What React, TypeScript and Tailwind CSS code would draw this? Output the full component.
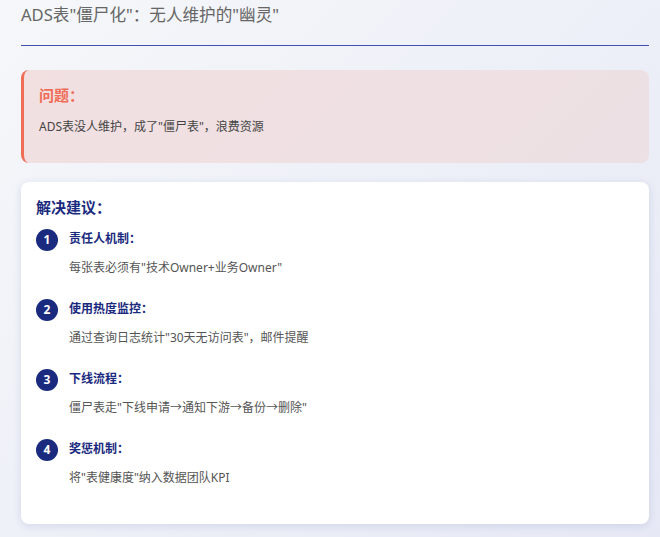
const steps = [
  { title: '责任人机制：', desc: '每张表必须有"技术Owner+业务Owner"' },
  { title: '使用热度监控：', desc: '通过查询日志统计"30天无访问表"，邮件提醒' },
  { title: '下线流程：', desc: '僵尸表走"下线申请→通知下游→备份→删除"' },
  { title: '奖惩机制：', desc: '将"表健康度"纳入数据团队KPI' },
]

export default function App() {
  return (
    <div className="h-[537px] w-[660px] overflow-hidden bg-[linear-gradient(135deg,#f5f7fa,#e6e9f5)] pr-[11px] pl-[21px] font-['Noto_Sans','Noto_Sans_CJK_SC',sans-serif]">
      {/* Title */}
      <div className="h-[46px] border-b border-[#3f52ab] pt-[2px]">
        <h1 className="text-[16.6px] leading-[26px] font-normal text-[#666666]">ADS表"僵尸化"：无人维护的"幽灵"</h1>
      </div>

      {/* Problem */}
      <div className="mt-6 h-[93px] rounded-lg border-l-[3px] border-[#ef6c57] bg-[linear-gradient(135deg,#f2e0e1,#ece0e4)] pt-[15px] pl-[15px]">
        <h2 className="text-[15px] leading-[20px] font-bold text-[#ef6c57]">问题：</h2>
        <p className="mt-[14px] text-[12px] leading-[16px] text-[#444444]">ADS表没人维护，成了"僵尸表"，浪费资源</p>
      </div>

      {/* Suggestions */}
      <div className="mt-[19px] h-[342px] rounded-lg bg-white pt-[15px] pl-[15px] shadow-[0_2px_8px_rgba(26,39,126,0.12)]">
        <h2 className="text-[15px] leading-[20px] font-bold text-[#1a2a7e]">解决建议：</h2>
        <ul className="mt-[14px] flex flex-col gap-[25px]">
          {steps.map((s, i) => (
            <li key={s.title} className="flex gap-[11px]">
              <div className="-mt-[2px] flex h-[22px] w-[22px] shrink-0 items-center justify-center rounded-full bg-[#1a2a7e] text-[12px] font-bold text-white">{i + 1}</div>
              <div>
                <h3 className="text-[12px] leading-[16px] font-bold text-[#1a2a7e]">{s.title}</h3>
                <p className="mt-[13px] text-[12px] leading-[16px] text-[#555555]">{s.desc}</p>
              </div>
            </li>
          ))}
        </ul>
      </div>
    </div>
  )
}
